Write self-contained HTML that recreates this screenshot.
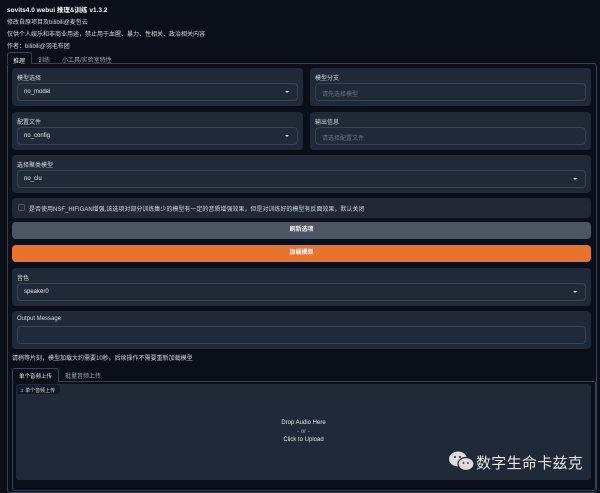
<!DOCTYPE html>
<html><head><meta charset="utf-8"><style>
*{box-sizing:border-box;margin:0;padding:0}
body{width:600px;height:489px;background:#0b0f19;font-family:"Liberation Sans","Noto Sans CJK SC",sans-serif;color:#e5e7eb;font-size:6px;position:relative;overflow:hidden;white-space:nowrap}
.a{position:absolute}
.blk{position:absolute;background:#1f2937;border-radius:4px}
.lbl{position:absolute;left:5px;top:5px;font-size:6px;color:#d1d5db}
.inp{position:absolute;left:5px;right:5px;top:15px;height:18px;border:1px solid #374151;border-radius:4px;background:#1f2937;font-size:6px;padding:5px 6px;color:#e5e7eb}
.ph{color:#6b7280}
.arr{position:absolute;right:8px;top:7px;width:0;height:0;border-left:2px solid transparent;border-right:2px solid transparent;border-top:2px solid #ddd}
</style></head><body>
<div class="a" style="left:7px;top:4px;font-size:6.5px;font-weight:bold;color:#f3f4f6">sovits4.0 webui 推理&amp;训练 v1.3.2</div>
<div class="a" style="left:7px;top:17px;color:#d1d5db">修改自原项目及bilibili@麦哲云</div>
<div class="a" style="left:7px;top:29px;color:#d1d5db">仅供个人娱乐和非商业用途，禁止用于血腥、暴力、性相关、政治相关内容</div>
<div class="a" style="left:7px;top:41px;color:#d1d5db">作者：bilibili@羽毛布团</div>
<div class="a" style="left:7px;top:52px;width:25px;height:12px;border:1px solid #374151;border-bottom:none;border-radius:3px 3px 0 0;background:#0b0f19;z-index:2;font-size:6px;padding:3px 5px">推理</div>
<div class="a" style="left:38px;top:55px;color:#9ca3af">训练</div>
<div class="a" style="left:62px;top:55px;color:#9ca3af">小工具/实验室特性</div>
<div class="a" style="left:7px;top:63px;width:590px;height:430px;border:1px solid #374151;border-radius:3px"></div>

<div class="blk" style="left:12px;top:68px;width:291px;height:38px"><div class="lbl">模型选择</div><div class="inp">no_model<div class="arr"></div></div></div>
<div class="blk" style="left:310px;top:68px;width:281px;height:38px"><div class="lbl">模型分支</div><div class="inp ph">请先选择模型</div></div>
<div class="blk" style="left:12px;top:112px;width:291px;height:38px"><div class="lbl">配置文件</div><div class="inp">no_config<div class="arr"></div></div></div>
<div class="blk" style="left:310px;top:112px;width:281px;height:38px"><div class="lbl">输出信息</div><div class="inp ph">请选择配置文件</div></div>
<div class="blk" style="left:12px;top:155px;width:579px;height:38px"><div class="lbl">选择聚类模型</div><div class="inp">no_clu<div class="arr"></div></div></div>
<div class="blk" style="left:12px;top:198px;width:579px;height:20px"><div class="a" style="left:6px;top:6px;width:7px;height:7px;border:1px solid #4b5563;border-radius:2px"></div><div class="a" style="left:17px;top:6px;color:#d1d5db">是否使用NSF_HIFIGAN增强,该选项对部分训练集少的模型有一定的音质增强效果，但是对训练好的模型有反面效果，默认关闭</div></div>
<div class="a" style="left:12px;top:222px;width:579px;height:17px;background:#4b5563;border-radius:4px;text-align:center;line-height:17px;font-weight:bold;color:#f3f4f6">刷新选项</div>
<div class="a" style="left:12px;top:245px;width:579px;height:17px;background:#e8732f;border-radius:4px;text-align:center;line-height:17px;font-weight:bold;color:#fff">加载模型</div>
<div class="blk" style="left:12px;top:268px;width:579px;height:38px"><div class="lbl">音色</div><div class="inp">speaker0<div class="arr"></div></div></div>
<div class="blk" style="left:12px;top:311px;width:579px;height:38px"><div class="lbl">Output Message</div><div class="inp"></div></div>
<div class="a" style="left:12px;top:353px;color:#d1d5db">请稍等片刻，模型加载大约需要10秒。后续操作不需要重新加载模型</div>
<div class="a" style="left:12px;top:368px;width:47px;height:14px;border:1px solid #374151;border-bottom:none;border-radius:3px 3px 0 0;background:#0b0f19;z-index:2;padding:3px 6px;color:#e5e7eb;font-size:5.5px">单个音频上传</div>
<div class="a" style="left:65px;top:371px;color:#9ca3af">批量音频上传</div>
<div class="a" style="left:12px;top:381px;width:584px;height:110px;border:1px solid #374151;border-radius:3px"></div>
<div class="a" style="left:16px;top:384px;width:575px;height:96px;background:#1f2937;border-radius:3px"></div>
<div class="a" style="left:17px;top:385px;width:43px;height:9px;background:#111827;border-radius:3px;font-size:5px;padding:2px 3px;color:#d1d5db">♫ 单个音频上传</div>
<div class="a" style="left:16px;top:419px;width:575px;text-align:center;color:#e5e7eb;line-height:8.5px">Drop Audio Here<br><span style="color:#9ca3af">- or -</span><br>Click to Upload</div>
<svg class="a" style="left:448px;top:451px" width="27" height="20" viewBox="0 0 27 20"><ellipse cx="10" cy="8" rx="9" ry="7.5" fill="#ddd"/><ellipse cx="18" cy="13" rx="8" ry="6.5" fill="#ddd" stroke="#1f2937" stroke-width="1.2"/><circle cx="7" cy="6" r="1" fill="#1f2937"/><circle cx="12" cy="6" r="1" fill="#1f2937"/><circle cx="15.5" cy="12" r="0.9" fill="#1f2937"/><circle cx="20" cy="12" r="0.9" fill="#1f2937"/></svg>
<div class="a" style="left:476px;top:452px;font-size:15px;color:#e5e7eb;letter-spacing:0.3px">数字生命卡兹克</div>
</body></html>
